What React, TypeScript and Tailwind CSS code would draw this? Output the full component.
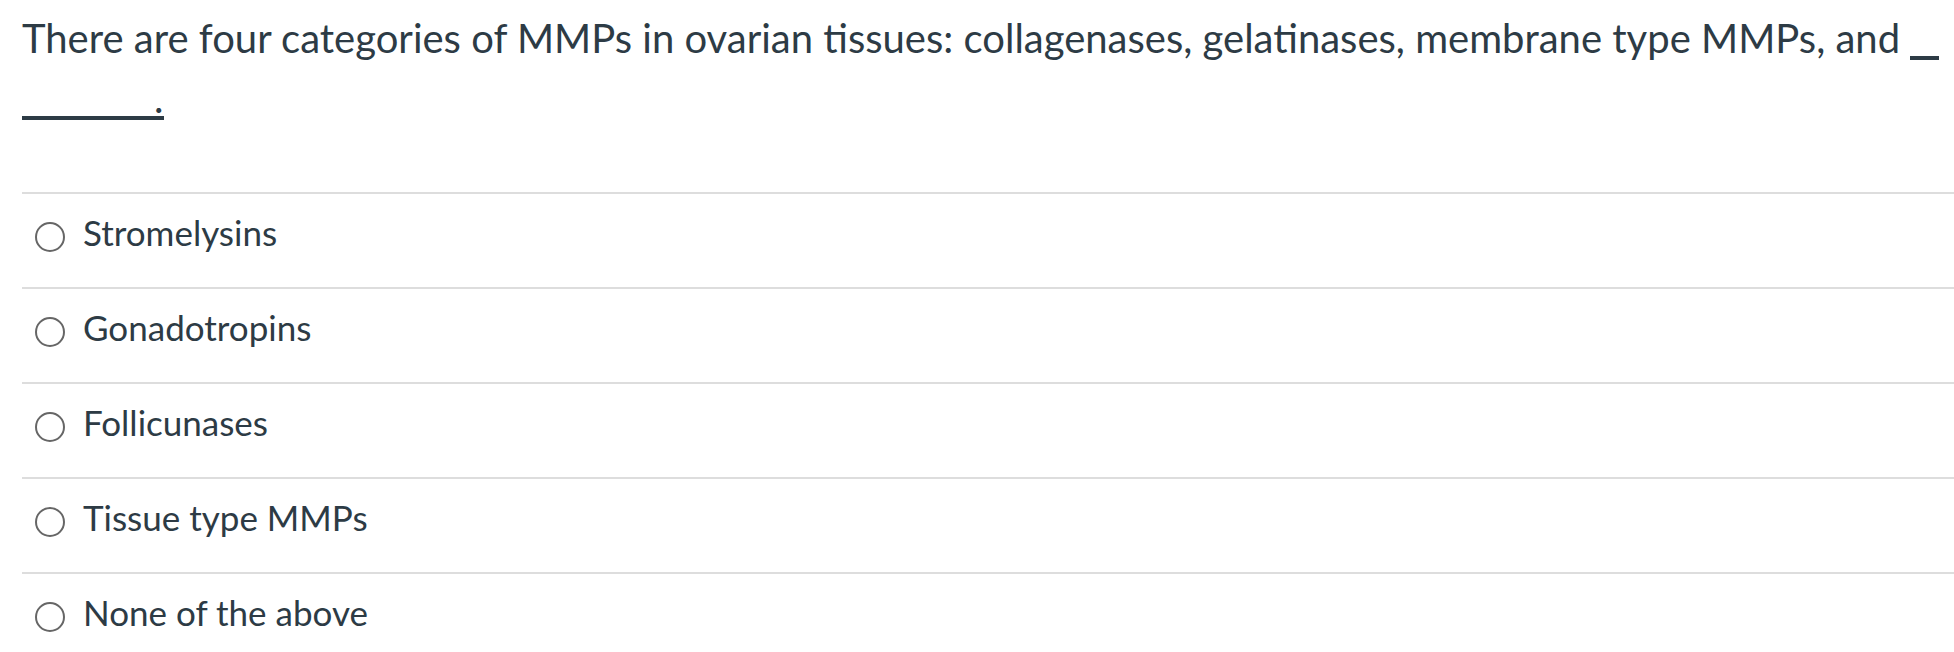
import React from "react";

const options = [
  "Stromelysins",
  "Gonadotropins",
  "Follicunases",
  "Tissue type MMPs",
  "None of the above",
];

export default function App() {
  return (
    <div className="w-[1954px] h-[652px] overflow-hidden bg-white font-['Lato','Liberation_Sans',sans-serif] text-[#2d3b45]">
      <div className="pl-[22px] pt-[8px]">
        <p className="text-[40px] leading-[60px]">
          There are four categories of MMPs in ovarian tissues: collagenases, gelatinases, membrane type MMPs, and{" "}
          <span className="inline-block align-baseline w-[29px] h-[4px] mb-[-7px] bg-[#2d3b45]" />
          <br />
          <span className="inline-block align-baseline w-[142px] h-[4px] mb-[-7px] bg-[#2d3b45]" />
          <span className="ml-[-10px]">.</span>
        </p>
      </div>
      <div className="mt-[64px] ml-[22px]">
        {options.map((o) => (
          <div
            key={o}
            className="box-border h-[95px] border-t-2 border-[#dddddd] flex items-start pt-[12px]"
          >
            <span className="mt-[16px] ml-[13px] w-[30px] h-[30px] rounded-full border-2 border-[#666666] shrink-0" />
            <span className="ml-[18px] text-[35px] leading-[52px]">{o}</span>
          </div>
        ))}
      </div>
    </div>
  );
}
